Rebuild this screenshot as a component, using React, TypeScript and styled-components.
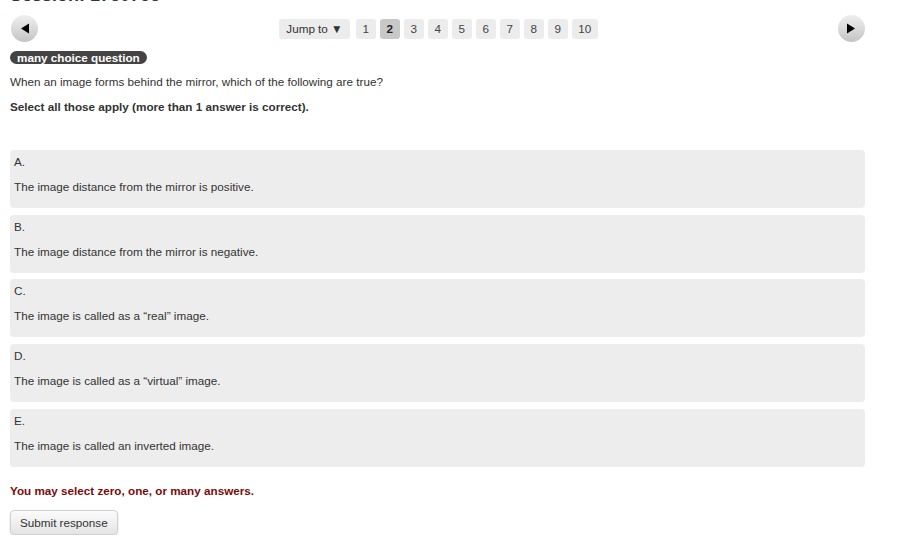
import styled, { createGlobalStyle } from 'styled-components'

const GlobalStyle = createGlobalStyle`
  html, body {
    margin: 0;
    padding: 0;
    background: #fff;
  }
  body {
    font-family: 'Liberation Sans', Arial, sans-serif;
    font-size: 11.7px;
    color: #333;
    overflow: hidden;
  }
`

const Page = styled.div`
  width: 906px;
  padding: 0 41px 0 10px;
  box-sizing: border-box;
`

const Heading = styled.h2`
  margin: -12px 0 0;
  font-size: 18px;
  font-weight: bold;
  color: #333;
  height: 14px;
  line-height: 14px;
`

const NavBar = styled.div`
  display: flex;
  align-items: center;
  justify-content: space-between;
  height: 27px;
  margin-top: 13px;
`

const RoundButton = styled.button`
  width: 27px;
  height: 27px;
  border-radius: 50%;
  border: none;
  padding: 0;
  margin: 0 0 0 1px;
  background: linear-gradient(to bottom, #efefef 0%, #d8d8d8 55%, #c4c4c4 100%);
  display: flex;
  align-items: center;
  justify-content: center;
  cursor: pointer;
`

const Pager = styled.div`
  display: flex;
  gap: 4px;
  align-items: center;
  margin-left: 2px;
`

const PageButton = styled.button<{ $active?: boolean; $wide?: boolean }>`
  height: 20px;
  min-width: ${p => (p.$wide ? '26px' : '20px')};
  padding: 0 ${p => (p.$wide ? '6px' : '0')};
  border: none;
  border-radius: 3px;
  background: ${p => (p.$active ? '#c8c8c8' : '#ececec')};
  color: ${p => (p.$active ? '#222' : '#444')};
  font-family: 'Liberation Sans', Arial, sans-serif;
  font-size: 11.7px;
  font-weight: ${p => (p.$active ? 'bold' : 'normal')};
  cursor: pointer;
`

const JumpButton = styled(PageButton)`
  padding: 0 7px;
  margin-right: 2px;
  color: #333;
`

const Tag = styled.span`
  display: block;
  width: fit-content;
  background: #444;
  color: #fff;
  font-weight: bold;
  font-size: 11.7px;
  line-height: 13px;
  padding: 0 7px;
  border-radius: 7px;
  margin-top: 9px;
`

const Prompt = styled.p`
  margin: 10px 0 0;
  line-height: 16px;
`

const Instruction = styled.p`
  margin: 9px 0 0;
  font-weight: bold;
  line-height: 16px;
`

const Options = styled.div`
  display: flex;
  flex-direction: column;
  gap: 6.7px;
  margin-top: 35px;
`

const Option = styled.div`
  background: #ededed;
  border-radius: 4px;
  height: 58px;
  padding: 5px 4px 0;
  box-sizing: border-box;
  display: flex;
  flex-direction: column;
  gap: 11px;
  line-height: 14px;
  cursor: pointer;
`

const Notice = styled.p`
  margin: 16px 0 0;
  color: #7a0b0b;
  font-weight: bold;
  line-height: 16px;
`

const SubmitButton = styled.button`
  margin-top: 11px;
  height: 25px;
  padding: 0 9px;
  border: 1px solid #d0d0d0;
  border-radius: 4px;
  background: linear-gradient(to bottom, #fbfbfb, #e4e4e4);
  box-shadow: 0 1px 2px rgba(0, 0, 0, 0.15);
  color: #333;
  font-family: 'Liberation Sans', Arial, sans-serif;
  font-size: 11.7px;
  cursor: pointer;
`

const options = [
  { letter: 'A.', text: 'The image distance from the mirror is positive.' },
  { letter: 'B.', text: 'The image distance from the mirror is negative.' },
  { letter: 'C.', text: 'The image is called as a \u201creal\u201d image.' },
  { letter: 'D.', text: 'The image is called as a \u201cvirtual\u201d image.' },
  { letter: 'E.', text: 'The image is called an inverted image.' }
]

function Arrow({ dir }: { dir: 'left' | 'right' }) {
  return (
    <svg width="10" height="11" viewBox="0 0 10 11">
      {dir === 'left' ? (
        <polygon points="9,0.5 9,10.5 1,5.5" fill="#000" />
      ) : (
        <polygon points="1,0.5 1,10.5 9,5.5" fill="#000" />
      )}
    </svg>
  )
}

export default function App() {
  const pages = [1, 2, 3, 4, 5, 6, 7, 8, 9, 10]
  return (
    <Page>
      <GlobalStyle />
      <Heading>Session: 1760756</Heading>
      <NavBar>
        <RoundButton type="button" aria-label="Previous">
          <Arrow dir="left" />
        </RoundButton>
        <Pager>
          <JumpButton type="button">Jump to ▼</JumpButton>
          {pages.map(n => (
            <PageButton key={n} type="button" $active={n === 2} $wide={n === 10}>
              {n}
            </PageButton>
          ))}
        </Pager>
        <RoundButton type="button" aria-label="Next">
          <Arrow dir="right" />
        </RoundButton>
      </NavBar>
      <Tag>many choice question</Tag>
      <Prompt>When an image forms behind the mirror, which of the following are true?</Prompt>
      <Instruction>Select all those apply (more than 1 answer is correct).</Instruction>
      <Options>
        {options.map(o => (
          <Option key={o.letter}>
            <span>{o.letter}</span>
            <span>{o.text}</span>
          </Option>
        ))}
      </Options>
      <Notice>You may select zero, one, or many answers.</Notice>
      <SubmitButton type="button">Submit response</SubmitButton>
    </Page>
  )
}
